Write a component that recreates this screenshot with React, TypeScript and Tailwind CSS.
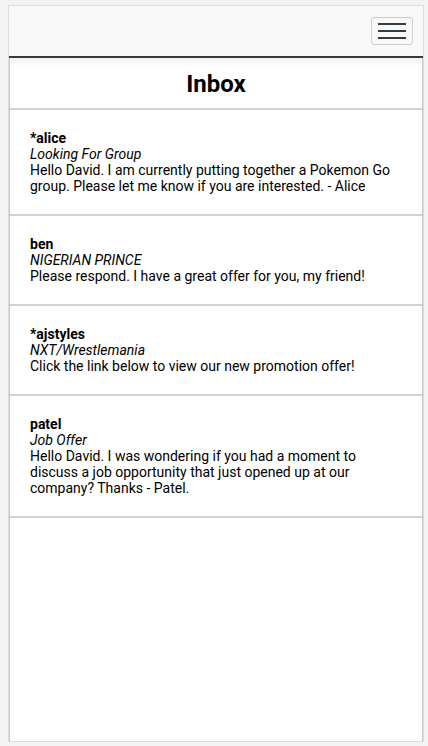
const messages = [
  {
    from: '*alice',
    subject: 'Looking For Group',
    body: 'Hello David. I am currently putting together a Pokemon Go group. Please let me know if you are interested. - Alice',
  },
  {
    from: 'ben',
    subject: 'NIGERIAN PRINCE',
    body: 'Please respond. I have a great offer for you, my friend!',
  },
  {
    from: '*ajstyles',
    subject: 'NXT/Wrestlemania',
    body: 'Click the link below to view our new promotion offer!',
  },
  {
    from: 'patel',
    subject: 'Job Offer',
    body: 'Hello David. I was wondering if you had a moment to discuss a job opportunity that just opened up at our company? Thanks - Patel.',
  },
];

export default function App() {
  return (
    <div
      className="h-[746px] w-[428px] overflow-hidden bg-[#f3f3f3] pt-[5px] pl-[8px] pr-[4px] pb-[4px]"
      style={{ fontFamily: 'Roboto, "Liberation Sans", sans-serif' }}
    >
      <div className="flex h-full flex-col border border-[#dcdcdc] bg-white">
        <header className="flex h-[52px] shrink-0 items-center justify-end border-b-2 border-[#333d44] bg-[#f8f8f8] pr-[10px]">
          <button className="flex h-[28px] w-[42px] flex-col items-center justify-center gap-[5px] rounded-[3px] border border-[#cccccc] bg-[#f8f8f8]">
            <span className="block h-[2px] w-[28px] bg-[#333d44]" />
            <span className="block h-[2px] w-[28px] bg-[#333d44]" />
            <span className="block h-[2px] w-[28px] bg-[#333d44]" />
          </button>
        </header>
        <main className="flex-1 border-l border-r border-[#c8c8c8] bg-white shadow-[inset_0_8px_8px_-6px_rgba(0,0,0,0.08)]">
          <h1 className="flex h-[52px] items-center justify-center border-b-2 border-[#cfd2d9] pt-[2px] text-[24px] font-bold text-black">
            Inbox
          </h1>
          {messages.map((m) => (
            <div
              key={m.from}
              className="border-b-2 border-[#cfd2d9] px-[20px] py-[20px] text-[14px] leading-[16px] text-black"
            >
              <div className="font-bold">{m.from}</div>
              <div className="italic">{m.subject}</div>
              <div>{m.body}</div>
            </div>
          ))}
        </main>
      </div>
    </div>
  );
}
